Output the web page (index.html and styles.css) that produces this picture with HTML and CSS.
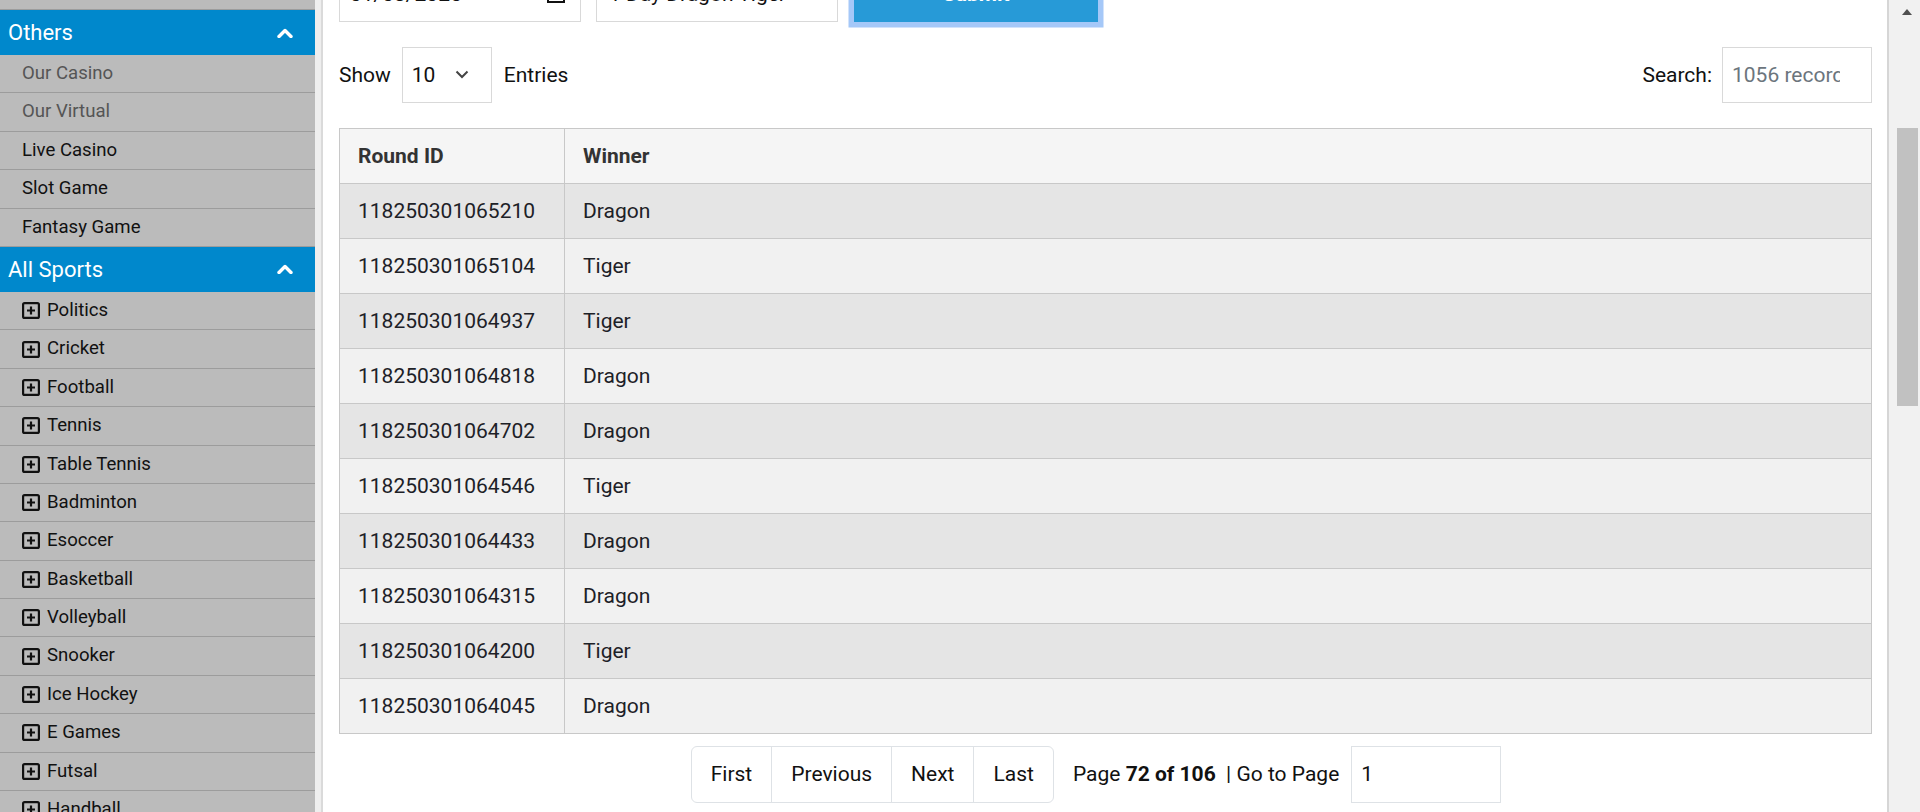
FILE: index.html
```html
<!DOCTYPE html>
<html lang="en">
<head>
    <meta charset="UTF-8">
    <meta name="viewport" content="width=device-width, initial-scale=1.0">
    <title>Casino Results</title>
    <link rel="stylesheet" href="styles.css">
</head>
<body>
    <div class="page">
        <!-- Left menu -->
        <aside class="sidebar">
            <div class="side-item">Sports Betting</div>

            <div class="side-head">Others
                <svg class="chev" width="16" height="10" viewBox="0 0 16 10"><path d="M2 8.5 L8 2.5 L14 8.5" fill="none" stroke="#fff" stroke-width="3.4" stroke-linecap="round" stroke-linejoin="round"/></svg>
            </div>
            <div class="side-item muted">Our Casino</div>
            <div class="side-item muted">Our Virtual</div>
            <div class="side-item">Live Casino</div>
            <div class="side-item">Slot Game</div>
            <div class="side-item">Fantasy Game</div>

            <div class="side-head">All Sports
                <svg class="chev" width="16" height="10" viewBox="0 0 16 10"><path d="M2 8.5 L8 2.5 L14 8.5" fill="none" stroke="#fff" stroke-width="3.4" stroke-linecap="round" stroke-linejoin="round"/></svg>
            </div>
            <div class="side-item sport"><svg class="plus" viewBox="0 0 18 17"><rect x="1.1" y="1.1" width="15.8" height="14.8" rx="1.5" fill="none" stroke="#111" stroke-width="2.2"/><path d="M9 4.5v8M5 8.5h8" stroke="#111" stroke-width="2.2"/></svg>Politics</div>
            <div class="side-item sport"><svg class="plus" viewBox="0 0 18 17"><rect x="1.1" y="1.1" width="15.8" height="14.8" rx="1.5" fill="none" stroke="#111" stroke-width="2.2"/><path d="M9 4.5v8M5 8.5h8" stroke="#111" stroke-width="2.2"/></svg>Cricket</div>
            <div class="side-item sport"><svg class="plus" viewBox="0 0 18 17"><rect x="1.1" y="1.1" width="15.8" height="14.8" rx="1.5" fill="none" stroke="#111" stroke-width="2.2"/><path d="M9 4.5v8M5 8.5h8" stroke="#111" stroke-width="2.2"/></svg>Football</div>
            <div class="side-item sport"><svg class="plus" viewBox="0 0 18 17"><rect x="1.1" y="1.1" width="15.8" height="14.8" rx="1.5" fill="none" stroke="#111" stroke-width="2.2"/><path d="M9 4.5v8M5 8.5h8" stroke="#111" stroke-width="2.2"/></svg>Tennis</div>
            <div class="side-item sport"><svg class="plus" viewBox="0 0 18 17"><rect x="1.1" y="1.1" width="15.8" height="14.8" rx="1.5" fill="none" stroke="#111" stroke-width="2.2"/><path d="M9 4.5v8M5 8.5h8" stroke="#111" stroke-width="2.2"/></svg>Table Tennis</div>
            <div class="side-item sport"><svg class="plus" viewBox="0 0 18 17"><rect x="1.1" y="1.1" width="15.8" height="14.8" rx="1.5" fill="none" stroke="#111" stroke-width="2.2"/><path d="M9 4.5v8M5 8.5h8" stroke="#111" stroke-width="2.2"/></svg>Badminton</div>
            <div class="side-item sport"><svg class="plus" viewBox="0 0 18 17"><rect x="1.1" y="1.1" width="15.8" height="14.8" rx="1.5" fill="none" stroke="#111" stroke-width="2.2"/><path d="M9 4.5v8M5 8.5h8" stroke="#111" stroke-width="2.2"/></svg>Esoccer</div>
            <div class="side-item sport"><svg class="plus" viewBox="0 0 18 17"><rect x="1.1" y="1.1" width="15.8" height="14.8" rx="1.5" fill="none" stroke="#111" stroke-width="2.2"/><path d="M9 4.5v8M5 8.5h8" stroke="#111" stroke-width="2.2"/></svg>Basketball</div>
            <div class="side-item sport"><svg class="plus" viewBox="0 0 18 17"><rect x="1.1" y="1.1" width="15.8" height="14.8" rx="1.5" fill="none" stroke="#111" stroke-width="2.2"/><path d="M9 4.5v8M5 8.5h8" stroke="#111" stroke-width="2.2"/></svg>Volleyball</div>
            <div class="side-item sport"><svg class="plus" viewBox="0 0 18 17"><rect x="1.1" y="1.1" width="15.8" height="14.8" rx="1.5" fill="none" stroke="#111" stroke-width="2.2"/><path d="M9 4.5v8M5 8.5h8" stroke="#111" stroke-width="2.2"/></svg>Snooker</div>
            <div class="side-item sport"><svg class="plus" viewBox="0 0 18 17"><rect x="1.1" y="1.1" width="15.8" height="14.8" rx="1.5" fill="none" stroke="#111" stroke-width="2.2"/><path d="M9 4.5v8M5 8.5h8" stroke="#111" stroke-width="2.2"/></svg>Ice Hockey</div>
            <div class="side-item sport"><svg class="plus" viewBox="0 0 18 17"><rect x="1.1" y="1.1" width="15.8" height="14.8" rx="1.5" fill="none" stroke="#111" stroke-width="2.2"/><path d="M9 4.5v8M5 8.5h8" stroke="#111" stroke-width="2.2"/></svg>E Games</div>
            <div class="side-item sport"><svg class="plus" viewBox="0 0 18 17"><rect x="1.1" y="1.1" width="15.8" height="14.8" rx="1.5" fill="none" stroke="#111" stroke-width="2.2"/><path d="M9 4.5v8M5 8.5h8" stroke="#111" stroke-width="2.2"/></svg>Futsal</div>
            <div class="side-item sport"><svg class="plus" viewBox="0 0 18 17"><rect x="1.1" y="1.1" width="15.8" height="14.8" rx="1.5" fill="none" stroke="#111" stroke-width="2.2"/><path d="M9 4.5v8M5 8.5h8" stroke="#111" stroke-width="2.2"/></svg>Handball</div>
        </aside>

        <div class="gutter"></div>

        <main class="content">
            <div class="filter-row">
                <div class="field date">01/03/2025
                    <svg class="cal" width="20" height="20" viewBox="0 0 20 20"><rect x="2" y="3" width="16" height="15" fill="none" stroke="#111" stroke-width="2"/><path d="M2 7h16M6 1v4M14 1v4" stroke="#111" stroke-width="2"/></svg>
                </div>
                <div class="field game">1 Day Dragon Tiger</div>
                <button class="btn-submit">Submit</button>
            </div>

            <div class="toolbar">
                <div class="length">
                    <span>Show</span>
                    <div class="length-select">10
                        <svg width="14" height="9" viewBox="0 0 14 9"><path d="M1.5 1.5 L7 7 L12.5 1.5" fill="none" stroke="#444" stroke-width="2"/></svg>
                    </div>
                    <span>Entries</span>
                </div>
                <div class="search">
                    <label>Search:</label>
                    <input type="text" placeholder="1056 records">
                </div>
            </div>

            <table class="results">
                <thead>
                    <tr><th class="col-id">Round ID</th><th>Winner</th></tr>
                </thead>
                <tbody>
                    <tr><td>118250301065210</td><td>Dragon</td></tr>
                    <tr><td>118250301065104</td><td>Tiger</td></tr>
                    <tr><td>118250301064937</td><td>Tiger</td></tr>
                    <tr><td>118250301064818</td><td>Dragon</td></tr>
                    <tr><td>118250301064702</td><td>Dragon</td></tr>
                    <tr><td>118250301064546</td><td>Tiger</td></tr>
                    <tr><td>118250301064433</td><td>Dragon</td></tr>
                    <tr><td>118250301064315</td><td>Dragon</td></tr>
                    <tr><td>118250301064200</td><td>Tiger</td></tr>
                    <tr><td>118250301064045</td><td>Dragon</td></tr>
                </tbody>
            </table>

            <div class="pager">
                <div class="pager-group">
                    <span class="pg-btn">First</span>
                    <span class="pg-btn">Previous</span>
                    <span class="pg-btn">Next</span>
                    <span class="pg-btn">Last</span>
                </div>
                <div class="pg-info">Page <b>72 of 106</b> &nbsp;| Go to Page</div>
                <input class="pg-input" type="text" value="1">
            </div>
        </main>

        <div class="scrollbar">
            <span class="arrow-up"></span>
            <span class="thumb"></span>
        </div>
    </div>
</body>
</html>
```

FILE: styles.css
```css
* {
    box-sizing: border-box;
}

body {
    margin: 0;
    font-family: Roboto, "Liberation Sans", sans-serif;
    color: #111;
    overflow: hidden;
}

.page {
    display: flex;
    height: 812px;
    overflow: hidden;
}

/* sidebar */
.sidebar {
    width: 315px;
    flex-shrink: 0;
    background: #bbbbbb;
    overflow: hidden;
}

.side-item {
    height: 38.4px;
    line-height: 37.4px;
    padding-left: 22px;
    font-size: 18.6px;
    color: #111;
    border-bottom: 1px solid #9c9c9c;
    white-space: nowrap;
}

.side-item:first-child {
    margin-top: -28.4px;
}

.side-item.muted {
    color: #555;
}

.side-item.sport {
    display: flex;
    align-items: center;
    gap: 7px;
}

.plus {
    width: 18px;
    height: 17px;
    flex-shrink: 0;
}

.side-head {
    height: 45px;
    background: #0088cc;
    color: #fff;
    font-size: 22px;
    padding: 0 22px 0 8px;
    display: flex;
    align-items: center;
    justify-content: space-between;
}

.gutter {
    width: 8px;
    flex-shrink: 0;
    background: #eeeeee;
    border-right: 2px solid #dadada;
}

/* main panel */
.content {
    flex: 1;
    background: #fff;
    border-right: 2px solid #d6d6d6;
    padding: 0 15px 0 16px;
    font-size: 21px;
}

.filter-row {
    display: flex;
    align-items: center;
    margin-top: -34px;
    height: 56px;
}

.field {
    width: 242px;
    height: 56px;
    border: 1px solid #d9d9d9;
    display: flex;
    align-items: center;
    justify-content: space-between;
    padding: 0 14px 0 10px;
}

.field.game {
    margin-left: 15px;
    padding-left: 12px;
}

.btn-submit {
    margin-left: 16px;
    width: 244px;
    height: 56px;
    border: none;
    background: #279ad7;
    color: #fff;
    font-family: inherit;
    font-size: 21px;
    font-weight: 700;
    box-shadow: 0 0 0 5.5px #a5c8f8;
}

.toolbar {
    display: flex;
    justify-content: space-between;
    align-items: center;
    margin-top: 24.6px;
    height: 56px;
}

.length {
    display: flex;
    align-items: center;
}

.length-select {
    width: 90px;
    height: 56px;
    border: 1px solid #d9d9d9;
    margin: 0 12px 0 11px;
    display: flex;
    align-items: center;
    justify-content: space-between;
    padding: 0 22px 0 9px;
}

.search {
    display: flex;
    align-items: center;
    gap: 10px;
}

.search input {
    width: 150px;
    height: 56px;
    border: 1px solid #d9d9d9;
    padding: 0 31px 0 9px;
    font-family: inherit;
    font-size: 21px;
    outline: none;
}

.search input::placeholder {
    color: #6c757d;
}

/* table */
.results {
    width: 100%;
    margin-top: 25px;
    border-collapse: collapse;
    border: 1px solid #c8c8c8;
}

.results th,
.results td {
    height: 55px;
    padding: 0 18px;
    text-align: left;
    border: 1px solid #c8c8c8;
    font-size: 21px;
}

.results th {
    background: #f5f5f5;
    color: #333;
    font-weight: 700;
}

.results .col-id {
    width: 225px;
}

.results td {
    color: #1d2127;
}

.results tbody tr:nth-child(odd) td {
    background: #e5e5e5;
}

.results tbody tr:nth-child(even) td {
    background: #f1f1f1;
}

/* pagination */
.pager {
    display: flex;
    justify-content: center;
    align-items: center;
    margin-top: 12px;
    padding-right: 19px;
}

.pager-group {
    display: flex;
    height: 57px;
    border: 1px solid #dee2e6;
    border-radius: 6px;
    overflow: hidden;
}

.pg-btn {
    display: flex;
    align-items: center;
    padding: 0 19px;
    border-left: 1px solid #dee2e6;
    color: #111;
}

.pg-btn:first-child {
    border-left: none;
}

.pg-info {
    margin-left: 19px;
}

.pg-input {
    margin-left: 12px;
    width: 150px;
    height: 57px;
    border: 1px solid #dee2e6;
    padding: 0 9px;
    font-family: inherit;
    font-size: 21px;
    color: #111;
    outline: none;
}

/* fake page scrollbar */
.scrollbar {
    position: relative;
    width: 31px;
    flex-shrink: 0;
    background: #f1f1f1;
}

.arrow-up {
    position: absolute;
    top: 9px;
    left: 13px;
    border-left: 5px solid transparent;
    border-right: 5px solid transparent;
    border-bottom: 6px solid #505050;
}

.thumb {
    position: absolute;
    top: 128px;
    left: 8px;
    width: 21px;
    height: 278px;
    background: #c1c1c1;
}
```
